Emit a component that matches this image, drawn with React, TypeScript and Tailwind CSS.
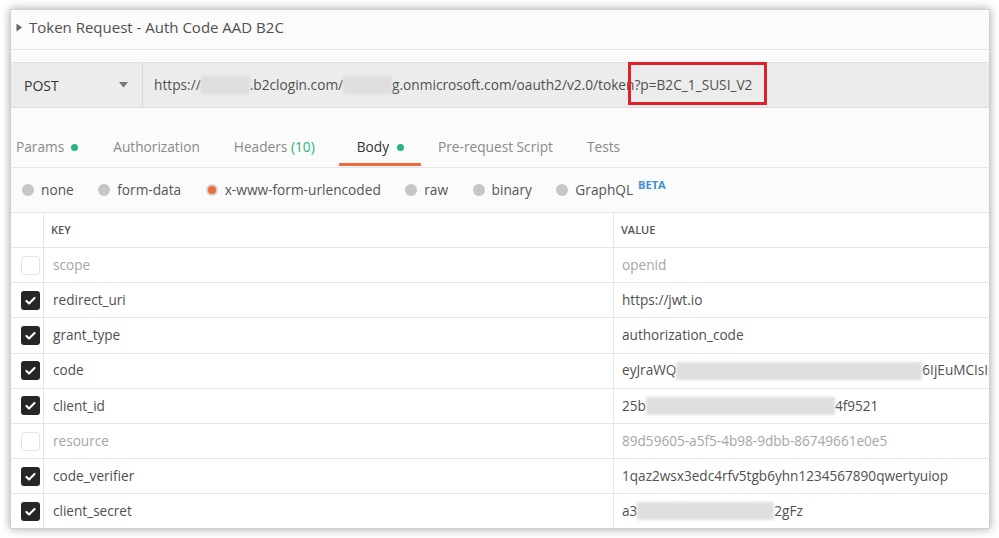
import React from "react";

const font = { fontFamily: '"Open Sans", "Noto Sans", sans-serif' };

type Row = {
  key: string;
  value: React.ReactNode;
  on: boolean;
};

function Blur({ w }: { w: number }) {
  return (
    <span
      className="inline-block shrink-0 h-[18px] align-middle bg-[#dedede] blur-[1.5px]"
      style={{ width: w }}
    />
  );
}

const rows: Row[] = [
  { key: "scope", value: "openid", on: false },
  { key: "redirect_uri", value: "https://jwt.io", on: true },
  { key: "grant_type", value: "authorization_code", on: true },
  {
    key: "code",
    value: (
      <>
        eyJraWQ
        <Blur w={246} />
        6IjEuMCIsIn
      </>
    ),
    on: true,
  },
  {
    key: "client_id",
    value: (
      <>
        25b
        <Blur w={189} />
        4f9521
      </>
    ),
    on: true,
  },
  { key: "resource", value: "89d59605-a5f5-4b98-9dbb-86749661e0e5", on: false },
  { key: "code_verifier", value: "1qaz2wsx3edc4rfv5tgb6yhn1234567890qwertyuiop", on: true },
  {
    key: "client_secret",
    value: (
      <>
        a3
        <Blur w={137} />
        2gFz
      </>
    ),
    on: true,
  },
];

function Checkbox({ on }: { on: boolean }) {
  if (!on) {
    return <div className="w-[19px] h-[19px] rounded-[3px] border border-[#e4e4e4] bg-white" />;
  }
  return (
    <div className="w-[19px] h-[19px] rounded-[3px] bg-[#262626] flex items-center justify-center">
      <svg width="13" height="13" viewBox="0 0 16 16" fill="none">
        <path d="M3 8.5l3.2 3.2L13 4.8" stroke="white" strokeWidth="2.6" strokeLinecap="round" strokeLinejoin="round" />
      </svg>
    </div>
  );
}

function Radio({ label, active }: { label: string; active?: boolean }) {
  return (
    <div className="flex items-center gap-[7px]">
      {active ? (
        <span className="w-[12px] h-[12px] rounded-full bg-[#d4d4d4] flex items-center justify-center">
          <span className="w-[8px] h-[8px] rounded-full bg-[#f26b3a]" />
        </span>
      ) : (
        <span className="w-[12px] h-[12px] rounded-full bg-[#c6c6c6]" />
      )}
      <span className="text-[13.7px] text-[#555]">{label}</span>
    </div>
  );
}

export default function App() {
  return (
    <div className="w-[999px] h-[538px] bg-white pt-[9px] pl-[10px] overflow-hidden" style={font}>
      <div className="w-[980px] h-[520px] bg-[#fbfbfb] border border-[#cfcfcf] shadow-[0_0_9px_rgba(0,0,0,0.35)] flex flex-col overflow-hidden">
        {/* Title */}
        <div className="h-[40px] shrink-0 flex items-center pl-[5px] pb-[5px] gap-[6px] border-b border-[#e6e6e6]">
          <svg width="7" height="9" viewBox="0 0 7 9">
            <path d="M0.5 0.5L6 4.5L0.5 8.5Z" fill="#666" />
          </svg>
          <span className="text-[15px] text-[#505050] font-medium">Token Request - Auth Code AAD B2C</span>
        </div>
        <div className="h-[13px] shrink-0 border-b border-[#e2e2e2]" />

        {/* URL bar */}
        <div className="h-[45px] shrink-0 flex bg-[#ececec] border-b border-[#dcdcdc]">
          <div className="w-[132px] shrink-0 flex items-center justify-between pl-[13px] pr-[14px] border-r border-[#d8d8d8]">
            <span className="text-[14px] text-[#333]">POST</span>
            <svg width="9" height="6" viewBox="0 0 9 6">
              <path d="M0 0H9L4.5 5.5Z" fill="#777" />
            </svg>
          </div>
          <div className="flex items-center pl-[11px] text-[13.7px] text-[#505050] whitespace-nowrap">
            https://
            <Blur w={49} />
            .b2clogin.com/
            <Blur w={49} />
            g.onmicrosoft.com/oauth2/v2.0/token
            <span className="relative">
              ?p=B2C_1_SUSI_V2
              <span className="absolute -left-[6px] -right-[15px] -top-[13px] h-[43px] border-[3px] border-[#e0202b]" />
            </span>
          </div>
        </div>
        <div className="h-[20px] shrink-0" />

        {/* Tabs */}
        <div className="h-[40px] shrink-0 flex items-center pl-[5px] gap-[34px] border-b border-[#e6e6e6] text-[13.7px] text-[#8a8a8a]">
          <div className="flex items-center gap-[7px] mr-[1px]">
            Params <span className="w-[7px] h-[7px] rounded-full bg-[#26b47f]" />
          </div>
          <div>Authorization</div>
          <div>
            Headers <span className="text-[#26b47f]">(10)</span>
          </div>
          <div className="relative flex items-center gap-[8px] text-[#333] ml-[8px]">
            Body <span className="w-[7px] h-[7px] rounded-full bg-[#26b47f]" />
            <span className="absolute -left-[18px] -right-[17px] top-[26px] h-[3px] bg-[#f26b3a]" />
          </div>
          <div>Pre-request Script</div>
          <div>Tests</div>
        </div>

        {/* Body types */}
        <div className="h-[45px] shrink-0 flex items-center pl-[11px] gap-[24.5px] border-b border-[#e6e6e6]">
          <Radio label="none" />
          <Radio label="form-data" />
          <Radio label="x-www-form-urlencoded" active />
          <Radio label="raw" />
          <Radio label="binary" />
          <div className="flex items-start">
            <Radio label="GraphQL" />
            <span className="ml-[5px] -mt-[3px] text-[11px] font-bold text-[#3b8fd8]">BETA</span>
          </div>
        </div>

        {/* Table */}
        <div className="flex-1 bg-white text-[13.6px]">
          <div className="h-[35px] flex border-b border-[#e6e6e6]">
            <div className="w-[33px] shrink-0 border-r border-[#e6e6e6]" />
            <div className="w-[570px] shrink-0 flex items-center pl-[7px] border-r border-[#e6e6e6] text-[11px] font-semibold text-[#555]">
              KEY
            </div>
            <div className="flex-1 flex items-center pl-[7px] text-[11px] font-semibold text-[#555]">VALUE</div>
          </div>
          {rows.map((r) => (
            <div key={r.key} className="h-[35.2px] flex border-b border-[#e6e6e6]">
              <div className="w-[33px] shrink-0 flex items-center pl-[10px] border-r border-[#e6e6e6]">
                <Checkbox on={r.on} />
              </div>
              <div
                className={`w-[570px] shrink-0 flex items-center pl-[9px] border-r border-[#e6e6e6] ${
                  r.on ? "text-[#505050]" : "text-[#a6a6a6]"
                }`}
              >
                {r.key}
              </div>
              <div
                className={`flex-1 flex items-center pl-[8px] whitespace-nowrap overflow-hidden ${
                  r.on ? "text-[#505050]" : "text-[#a6a6a6]"
                }`}
              >
                {r.value}
              </div>
            </div>
          ))}
        </div>
      </div>
    </div>
  );
}
